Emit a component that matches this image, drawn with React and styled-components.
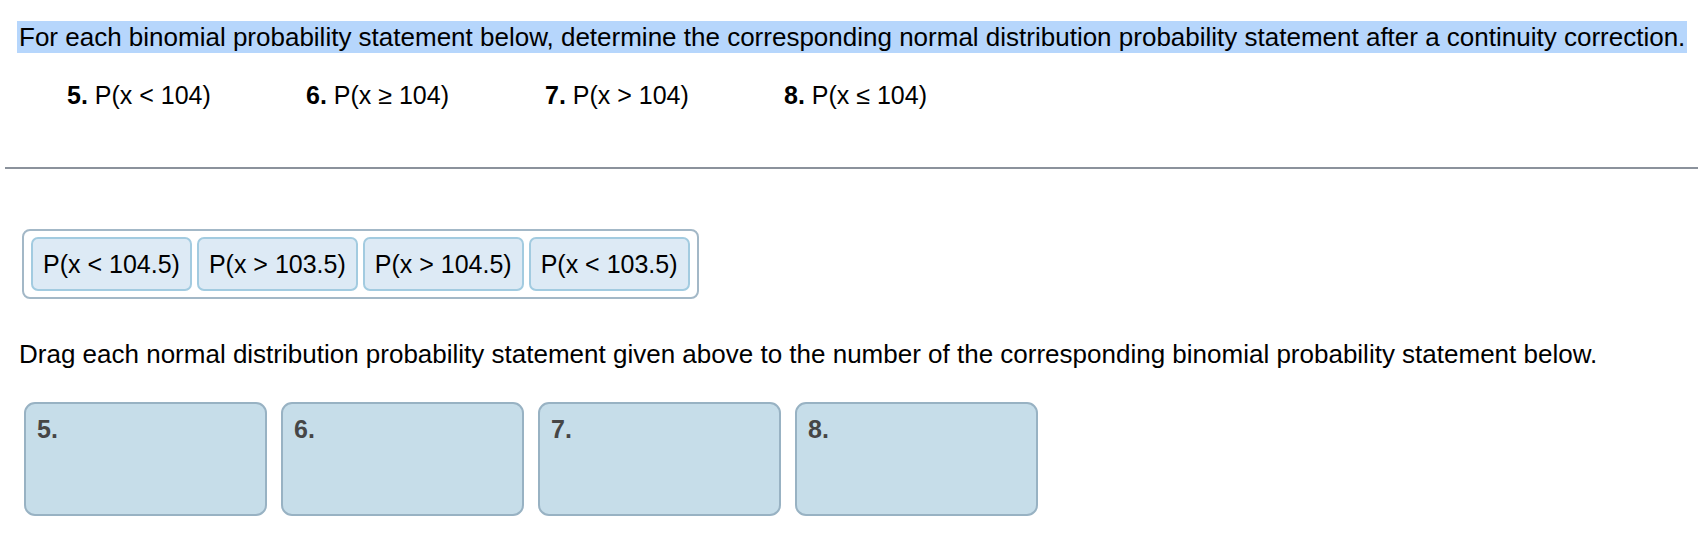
import React from "react";
import styled, { createGlobalStyle } from "styled-components";

const GlobalStyle = createGlobalStyle`
  body {
    margin: 0;
    background: #fff;
    font-family: "Liberation Sans", Arial, sans-serif;
    color: #000;
  }
`;

const Page = styled.div`
  width: 1698px;
  height: 544px;
  padding-top: 21px;
  box-sizing: border-box;
  overflow: hidden;
`;

const Heading = styled.div`
  padding-left: 17px;
  font-size: 26px;
  line-height: 32px;
  white-space: nowrap;
  span {
    background: #b6d6fc;
    padding: 0 2px;
    display: inline-block;
  }
`;

const Statements = styled.div`
  display: flex;
  padding-left: 67px;
  margin-top: 26px;
  font-size: 25px;
  line-height: 32px;
`;

const Statement = styled.div`
  width: 239px;
  white-space: nowrap;
  b {
    font-weight: bold;
  }
`;

const Divider = styled.hr`
  margin: 56px 0 0 5px;
  border: none;
  border-top: 2px solid #8b929c;
  height: 0;
`;

const Pool = styled.div`
  display: inline-flex;
  gap: 5px;
  margin: 60px 0 0 22px;
  padding: 6px 7px 6px 7px;
  border: 2px solid #a3b8c7;
  border-radius: 8px;
`;

const Token = styled.div`
  height: 50px;
  padding: 0 10px;
  display: flex;
  align-items: center;
  background: #ddeaf5;
  border: 2px solid #a2cbe0;
  border-radius: 7px;
  font-size: 25px;
  white-space: nowrap;
`;

const Instruction = styled.div`
  padding-left: 19px;
  margin-top: 39px;
  font-size: 26px;
  line-height: 32px;
  white-space: nowrap;
`;

const Targets = styled.div`
  display: flex;
  gap: 14px;
  margin: 32px 0 0 24px;
`;

const Target = styled.div`
  width: 243px;
  height: 114px;
  padding: 12px 11px;
  box-sizing: border-box;
  background: #c6dde9;
  border: 2px solid #98b2c3;
  border-radius: 11px;
  font-size: 25px;
  font-weight: bold;
  color: #464646;
  line-height: 26px;
`;

const statements = [
  { n: "5.", text: "P(x < 104)" },
  { n: "6.", text: "P(x ≥ 104)" },
  { n: "7.", text: "P(x > 104)" },
  { n: "8.", text: "P(x ≤ 104)" },
];

const tokens = ["P(x < 104.5)", "P(x > 103.5)", "P(x > 104.5)", "P(x < 103.5)"];

export default function App() {
  return (
    <Page>
      <GlobalStyle />
      <Heading>
        <span>
          For each binomial probability statement below, determine the corresponding normal
          distribution probability statement after a continuity correction.
        </span>
      </Heading>
      <Statements>
        {statements.map((s) => (
          <Statement key={s.n}>
            <b>{s.n}</b> {s.text}
          </Statement>
        ))}
      </Statements>
      <Divider />
      <Pool>
        {tokens.map((t) => (
          <Token key={t}>{t}</Token>
        ))}
      </Pool>
      <Instruction>
        Drag each normal distribution probability statement given above to the number of the
        corresponding binomial probability statement below.
      </Instruction>
      <Targets>
        {statements.map((s) => (
          <Target key={s.n}>{s.n}</Target>
        ))}
      </Targets>
    </Page>
  );
}
